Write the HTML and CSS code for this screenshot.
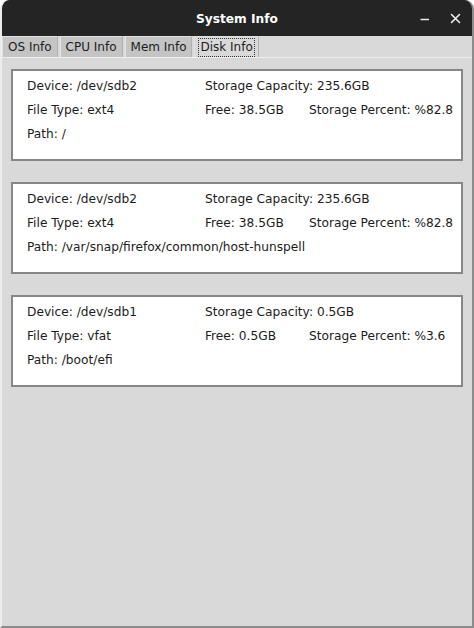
FILE: index.html
```html
<!DOCTYPE html>
<html lang="en">
<head>
<meta charset="utf-8">
<title>System Info</title>
<link rel="stylesheet" href="styles.css">
</head>
<body>
<div class="window">
  <header class="titlebar">
    <span class="spacer"></span>
    <span class="title">System Info</span>
    <div class="controls">
      <svg class="ctl" width="10" height="10" viewBox="0 0 10 10"><line x1="0.5" y1="6.5" x2="9" y2="6.5" stroke="#e8e8e8" stroke-width="1.3"/></svg>
      <svg class="ctl" width="11" height="11" viewBox="0 0 11 11"><path d="M1.5 1.5 L9.5 9.5 M9.5 1.5 L1.5 9.5" stroke="#f0f0f0" stroke-width="1.6" stroke-linecap="round"/></svg>
    </div>
  </header>
  <nav class="tabs">
    <span class="tab">OS Info</span>
    <span class="tab">CPU Info</span>
    <span class="tab">Mem Info</span>
    <span class="tab active"><span class="focus">Disk Info</span></span>
  </nav>
  <main class="pane">
    <section class="disk">
      <span>Device: /dev/sdb2</span>
      <span class="span2">Storage Capacity: 235.6GB</span>
      <span>File Type: ext4</span>
      <span>Free: 38.5GB</span>
      <span>Storage Percent: %82.8</span>
      <span class="span3">Path: /</span>
    </section>
    <section class="disk">
      <span>Device: /dev/sdb2</span>
      <span class="span2">Storage Capacity: 235.6GB</span>
      <span>File Type: ext4</span>
      <span>Free: 38.5GB</span>
      <span>Storage Percent: %82.8</span>
      <span class="span3">Path: /var/snap/firefox/common/host-hunspell</span>
    </section>
    <section class="disk">
      <span>Device: /dev/sdb1</span>
      <span class="span2">Storage Capacity: 0.5GB</span>
      <span>File Type: vfat</span>
      <span>Free: 0.5GB</span>
      <span>Storage Percent: %3.6</span>
      <span class="span3">Path: /boot/efi</span>
    </section>
  </main>
</div>
</body>
</html>
```
FILE: styles.css
```css
html, body {
  margin: 0;
  padding: 0;
  background: #ffffff;
}

body {
  font-family: "DejaVu Sans", "Liberation Sans", sans-serif;
  font-size: 12.2px;
  color: #1c1c1c;
}

.window {
  width: 474px;
  height: 628px;
  box-sizing: border-box;
  display: flex;
  flex-direction: column;
  background: #d9d9d9;
  border-left: 2px solid #ececec;
  border-right: 2px solid #8c8c8c;
  border-bottom: 2px solid #8c8c8c;
  border-radius: 9px 9px 0 0;
  overflow: hidden;
}

.titlebar {
  height: 36px;
  flex: none;
  background: #242424;
  display: grid;
  grid-template-columns: 1fr auto 1fr;
  align-items: center;
  margin: 0 -2px;
}

.title {
  color: #ffffff;
  font-weight: bold;
  font-size: 12.2px;
  padding-top: 1px;
}

.controls {
  justify-self: end;
  display: flex;
  align-items: center;
  gap: 20px;
  padding-right: 13px;
}

.ctl {
  display: block;
}

.tabs {
  height: 21px;
  flex: none;
  display: flex;
  gap: 2px;
  padding-left: 0;
  border-bottom: 1px solid #eeeeee;
  font-size: 12px;
}

.tab {
  display: flex;
  align-items: center;
  padding: 0 5px;
  background: #c4c4c4;
  border: 1px solid #e2e2e2;
  border-right-color: #b0b0b0;
  border-bottom: none;
  color: #1c1c1c;
}

.tab.active {
  background: #d9d9d9;
  padding: 0 4px;
}

.focus {
  outline: 1px dotted #333;
  outline-offset: 0;
  padding: 1px 1px;
  line-height: 15px;
}

.pane {
  flex: 1;
  display: flex;
  flex-direction: column;
  gap: 21px;
  padding: 11px 9px 0;
}

.disk {
  background: #ffffff;
  border: 2px solid #878787;
  display: grid;
  grid-template-columns: 178px 104px 1fr;
  grid-auto-rows: 24px;
  align-items: center;
  padding: 3px 0 13px 14px;
  white-space: nowrap;
}

.span2 {
  grid-column: span 2;
}

.span3 {
  grid-column: 1 / -1;
}
```
